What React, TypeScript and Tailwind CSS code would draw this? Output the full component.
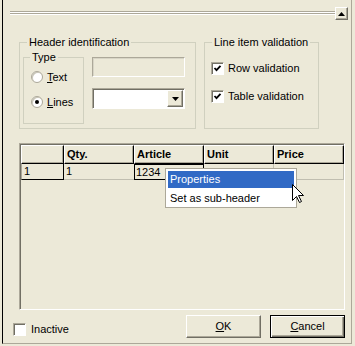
import { ReactNode } from 'react';

function Check({ checked }: { checked?: boolean }) {
  return (
    <div className="w-[13px] h-[13px] shrink-0 bg-white border-t border-l border-t-[#aca899] border-l-[#aca899] border-r border-b border-r-white border-b-white shadow-[inset_1px_1px_0_#716f64] flex items-center justify-center">
      {checked && (
        <svg width="9" height="9" viewBox="0 0 9 9">
          <path d="M1.5 4 L3.5 6.2 L7.5 1.8" fill="none" stroke="#000" strokeWidth="1.8" />
        </svg>
      )}
    </div>
  );
}

function Radio({ on }: { on?: boolean }) {
  return (
    <div className="w-[12px] h-[12px] shrink-0 rounded-full bg-white border border-[#aca899] shadow-[inset_1px_1px_0_#c9c6b8] flex items-center justify-center">
      {on && <div className="w-[4px] h-[4px] rounded-full bg-black" />}
    </div>
  );
}

function Group({ title, className, children, legendClass }: { title: string; className: string; children: ReactNode; legendClass?: string }) {
  return (
    <fieldset className={`border border-[#d0d0bf] ${className}`}>
      <legend className={`leading-[13px] px-[2px] ${legendClass ?? 'ml-[7px]'}`}>{title}</legend>
      {children}
    </fieldset>
  );
}

function HeadCell({ w, children }: { w: string; children?: ReactNode }) {
  return (
    <div className={`${w} h-full flex items-center pl-[2px] font-bold border-t border-l border-t-white border-l-white border-r border-b border-r-black border-b-black shadow-[inset_-1px_-1px_0_#aca899]`}>
      {children}
    </div>
  );
}

export default function App() {
  return (
    <div className="relative w-[355px] h-[346px] bg-[#ece9d8] pl-[2px] font-['Liberation_Sans',Arial,sans-serif] text-[11px] leading-[13px] text-black overflow-hidden">
      <div className="w-[350px] h-[344px] border-l border-l-black border-r border-r-[#aca899] border-b border-b-[#aca899] flex flex-col">
        {/* splitter bar */}
        <div className="flex items-start pt-[7px] pl-[7px] pr-[3px]">
          <div className="flex-1 mt-[4px] flex flex-col">
            <div className="h-[2px] border-t border-t-[#aca899] border-b border-b-white" />
            <div className="h-[2px] border-t border-t-[#aca899] border-b border-b-white" />
          </div>
          <div className="w-[13px] h-[13px] border-t border-l border-t-white border-l-white border-r border-b border-r-[#716f64] border-b-[#716f64] shadow-[inset_-1px_-1px_0_#aca899] flex items-center justify-center">
            <svg width="7" height="4" viewBox="0 0 7 4">
              <polygon points="3.5,0 7,4 0,4" fill="#000" />
            </svg>
          </div>
        </div>

        {/* group boxes */}
        <div className="flex mt-[16px] ml-[16px] gap-[8px]">
          <Group title="Header identification" className="w-[177px] h-[93px]">
            <div className="flex pl-[3px] pt-[2px] gap-[8px]">
              <Group title="Type" className="w-[61px] h-[73px]" legendClass="ml-[6px]">
                <div className="flex flex-col pl-[7px] pt-[7px]">
                  <div className="flex items-center gap-[4px] h-[12px]">
                    <Radio />
                    <span><span className="underline">T</span>ext</span>
                  </div>
                  <div className="flex items-center gap-[4px] h-[12px] mt-[13px]">
                    <Radio on />
                    <span><span className="underline">L</span>ines</span>
                  </div>
                </div>
              </Group>
              <div className="flex flex-col mt-[6px]">
                <div className="w-[93px] h-[20px] border-t border-l border-t-[#aca899] border-l-[#aca899] border-r border-b border-r-white border-b-white shadow-[inset_1px_1px_0_#d8d5c6]" />
                <div className="w-[93px] h-[21px] mt-[11px] bg-white border-t border-l border-t-[#aca899] border-l-[#aca899] border-r border-b border-r-white border-b-white shadow-[inset_1px_1px_0_#716f64] flex justify-end items-center pr-[1px]">
                  <div className="w-[16px] h-[17px] bg-[#ece9d8] border-t border-l border-t-white border-l-white border-r border-b border-r-[#716f64] border-b-[#716f64] shadow-[inset_-1px_-1px_0_#aca899] flex items-center justify-center">
                    <svg width="7" height="4" viewBox="0 0 7 4">
                      <polygon points="0,0 7,0 3.5,4" fill="#000" />
                    </svg>
                  </div>
                </div>
              </div>
            </div>
          </Group>
          <Group title="Line item validation" className="w-[115px] h-[93px]">
            <div className="flex flex-col pl-[6px] pt-[13px]">
              <div className="flex items-center gap-[4px] h-[13px]">
                <Check checked />
                <span>Row validation</span>
              </div>
              <div className="flex items-center gap-[4px] h-[13px] mt-[15px]">
                <Check checked />
                <span>Table validation</span>
              </div>
            </div>
          </Group>
        </div>

        {/* grid */}
        <div className="mt-[14px] ml-[16px] w-[326px] h-[167px] border-t border-l border-t-[#aca899] border-l-[#aca899] border-r border-b border-r-white border-b-white">
          <div className="w-full h-full border-t border-l border-t-[#716f64] border-l-[#716f64] flex flex-col">
            <div className="flex h-[19px]">
              <HeadCell w="w-[43px]" />
              <HeadCell w="w-[70px]">Qty.</HeadCell>
              <HeadCell w="w-[70px]">Article</HeadCell>
              <HeadCell w="w-[70px]">Unit</HeadCell>
              <HeadCell w="w-[70px]">Price</HeadCell>
            </div>
            <div className="flex h-[16px]">
              <div className="w-[43px] h-full flex items-center pl-[2px] border-l border-l-[#aca899] border-r border-b border-r-black border-b-black">1</div>
              <div className="w-[70px] h-full flex items-center pl-[2px] border-b border-b-[#c0beb0]">1</div>
              <div className="w-[70px] h-full flex items-center pl-[1px] border border-black">1234</div>
              <div className="w-[70px] h-full border-r border-b border-r-[#c0beb0] border-b-[#c0beb0]" />
              <div className="w-[70px] h-full border-r border-b border-r-[#c0beb0] border-b-[#c0beb0]" />
            </div>
          </div>
        </div>

        {/* bottom row */}
        <div className="flex items-start mt-[5px] pl-[10px]">
          <div className="flex items-center gap-[5px] mt-[8px]">
            <div className="w-[13px] h-[13px] bg-white border-t border-l border-t-[#aca899] border-l-[#aca899] border-r border-b border-r-white border-b-white shadow-[inset_1px_1px_0_#716f64]" />
            <span>Inactive</span>
          </div>
          <div className="ml-auto flex gap-[9px] mr-[6px]">
            <button className="w-[75px] h-[23px] bg-[#ece9d8] border-t border-l border-t-white border-l-white border-r border-b border-r-[#716f64] border-b-[#716f64] shadow-[inset_-1px_-1px_0_#aca899] flex items-center justify-center">
              <span><span className="underline">O</span>K</span>
            </button>
            <button className="w-[75px] h-[23px] bg-[#ece9d8] border border-black shadow-[inset_1px_1px_0_#fff,inset_-1px_-1px_0_#716f64,inset_-2px_-2px_0_#aca899] flex items-center justify-center">
              <span><span className="underline">C</span>ancel</span>
            </button>
          </div>
        </div>
      </div>

      {/* context menu */}
      <div className="absolute left-[165px] top-[168px] w-[132px] h-[40px] bg-white border border-[#aca899] p-[2px] flex flex-col">
        <div className="h-[17px] flex items-center pl-[2px] bg-[#316ac5] text-white">Properties</div>
        <div className="h-[17px] flex items-center pl-[2px] pt-[4px]">Set as sub-header</div>
      </div>

      {/* mouse pointer */}
      <svg className="absolute left-[292px] top-[184px]" width="13" height="20" viewBox="0 0 13 20">
        <path d="M0.5 0.5 L0.5 16.5 L4.5 12.5 L7.5 18.5 L9.5 17.5 L6.5 11.5 L11.5 11.5 Z" fill="#fff" stroke="#000" strokeWidth="1" />
      </svg>
    </div>
  );
}
